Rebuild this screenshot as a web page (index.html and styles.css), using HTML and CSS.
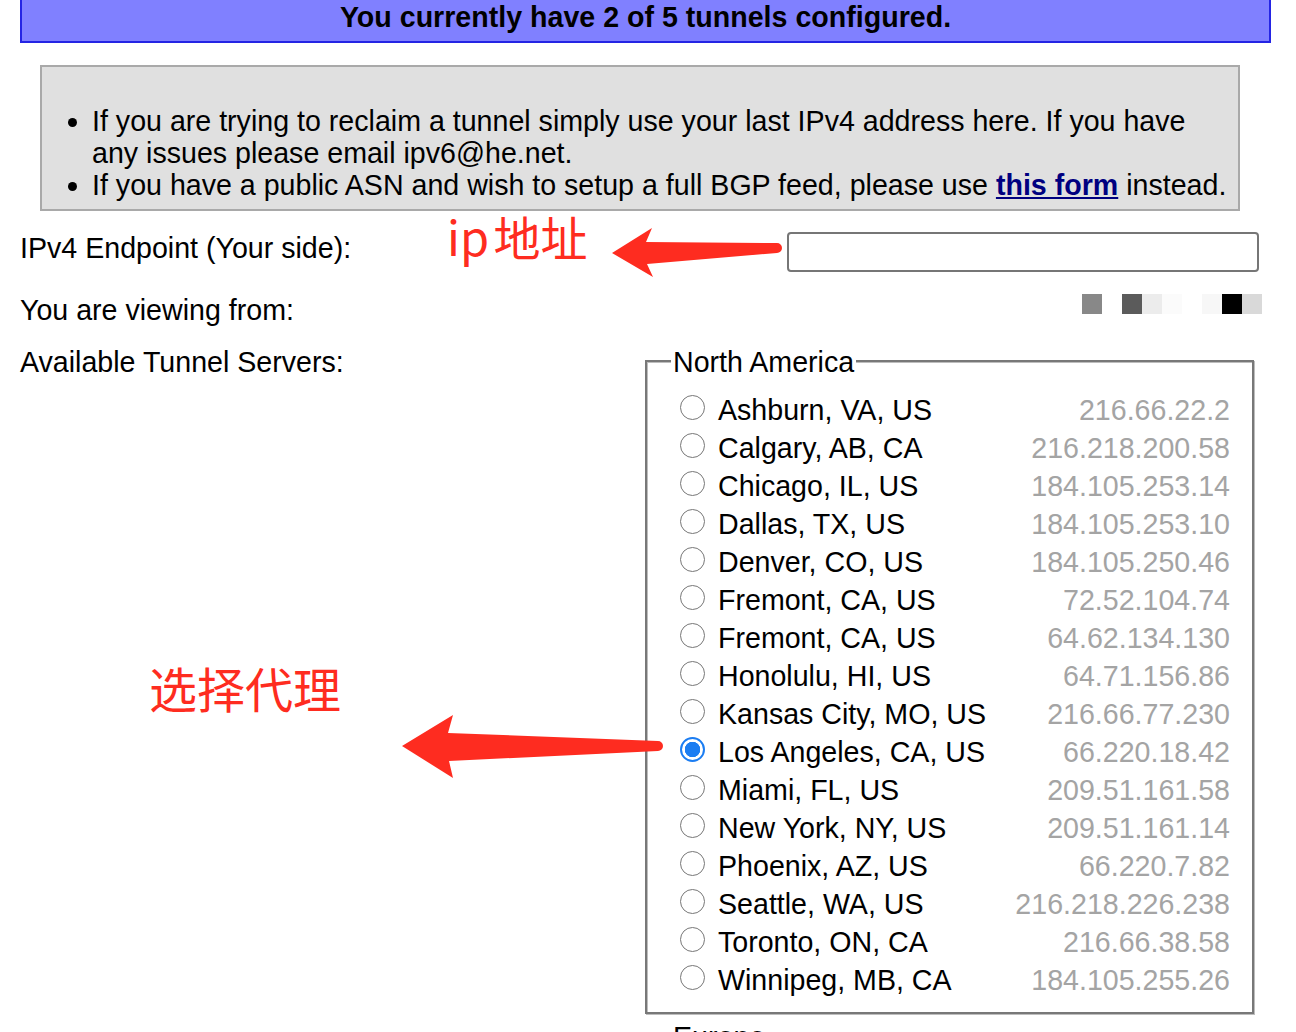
FILE: index.html
```html
<!DOCTYPE html>
<html lang="en">
<head>
<meta charset="utf-8">
<title>Create Regular Tunnel</title>
<link rel="stylesheet" href="styles.css">
</head>
<body>
<div class="page">
  <div class="banner">You currently have 2 of 5 tunnels configured.</div>

  <div class="notice">
    <ul>
      <li>If you are trying to reclaim a tunnel simply use your last IPv4 address here. If you have<br>any issues please email ipv6@he.net.</li>
      <li>If you have a public ASN and wish to setup a full BGP feed, please use <a href="#" class="link">this form</a> instead.</li>
    </ul>
  </div>

  <div class="form">
    <div class="label">IPv4 Endpoint (Your side):</div>
    <div><input class="endpoint" type="text" value=""></div>

    <div class="label">You are viewing from:</div>
    <div class="pixels">
      <span class="px" style="background:#888888"></span>
      <span class="px" style="background:#ffffff"></span>
      <span class="px" style="background:#5b5b5b"></span>
      <span class="px" style="background:#ececec"></span>
      <span class="px" style="background:#fbfbfb"></span>
      <span class="px" style="background:#ffffff"></span>
      <span class="px" style="background:#f7f7f7"></span>
      <span class="px" style="background:#000000"></span>
      <span class="px" style="background:#d9d9d9"></span>
    </div>

    <div class="label">Available Tunnel Servers:</div>
    <div class="regions">
      <fieldset class="region">
        <legend>North America</legend>
        <label class="server"><input class="radio" type="radio" name="srv"><span class="city">Ashburn, VA, US</span><span class="ip">216.66.22.2</span></label>
        <label class="server"><input class="radio" type="radio" name="srv"><span class="city">Calgary, AB, CA</span><span class="ip">216.218.200.58</span></label>
        <label class="server"><input class="radio" type="radio" name="srv"><span class="city">Chicago, IL, US</span><span class="ip">184.105.253.14</span></label>
        <label class="server"><input class="radio" type="radio" name="srv"><span class="city">Dallas, TX, US</span><span class="ip">184.105.253.10</span></label>
        <label class="server"><input class="radio" type="radio" name="srv"><span class="city">Denver, CO, US</span><span class="ip">184.105.250.46</span></label>
        <label class="server"><input class="radio" type="radio" name="srv"><span class="city">Fremont, CA, US</span><span class="ip">72.52.104.74</span></label>
        <label class="server"><input class="radio" type="radio" name="srv"><span class="city">Fremont, CA, US</span><span class="ip">64.62.134.130</span></label>
        <label class="server"><input class="radio" type="radio" name="srv"><span class="city">Honolulu, HI, US</span><span class="ip">64.71.156.86</span></label>
        <label class="server"><input class="radio" type="radio" name="srv"><span class="city">Kansas City, MO, US</span><span class="ip">216.66.77.230</span></label>
        <label class="server"><input class="radio" type="radio" name="srv" checked><span class="city">Los Angeles, CA, US</span><span class="ip">66.220.18.42</span></label>
        <label class="server"><input class="radio" type="radio" name="srv"><span class="city">Miami, FL, US</span><span class="ip">209.51.161.58</span></label>
        <label class="server"><input class="radio" type="radio" name="srv"><span class="city">New York, NY, US</span><span class="ip">209.51.161.14</span></label>
        <label class="server"><input class="radio" type="radio" name="srv"><span class="city">Phoenix, AZ, US</span><span class="ip">66.220.7.82</span></label>
        <label class="server"><input class="radio" type="radio" name="srv"><span class="city">Seattle, WA, US</span><span class="ip">216.218.226.238</span></label>
        <label class="server"><input class="radio" type="radio" name="srv"><span class="city">Toronto, ON, CA</span><span class="ip">216.66.38.58</span></label>
        <label class="server"><input class="radio" type="radio" name="srv"><span class="city">Winnipeg, MB, CA</span><span class="ip">184.105.255.26</span></label>
      </fieldset>
      <fieldset class="region next">
        <legend>Europe</legend>
        <label class="server"><input class="radio" type="radio" name="srv"><span class="city">Amsterdam, NL</span><span class="ip">216.66.84.46</span></label>
        <label class="server"><input class="radio" type="radio" name="srv"><span class="city">Berlin, DE</span><span class="ip">216.66.86.114</span></label>
      </fieldset>
    </div>
  </div>
</div>

<div class="note note-ip">ip 地址</div>
<div class="note note-proxy">选择代理</div>
<svg class="arrows" width="1296" height="1032" viewBox="0 0 1296 1032" aria-hidden="true">
  <path d="M612 253 L652 228 L646 242 L777 243 A5 5 0 0 1 777 253 L647 264 L653 277 Z" fill="#fe2c20"/>
  <path d="M402 746 L453 715 L448 733 L658 741 A5 5 0 0 1 658 751 L449 761 L453 778 Z" fill="#fe2c20"/>
</svg>
</body>
</html>
```

FILE: styles.css
```css
html {
  overflow: hidden;
}

body {
  margin: 0;
  position: relative;
  font-family: "Liberation Sans", Arial, Helvetica, sans-serif;
  font-size: 28.6px;
  line-height: 32px;
  color: #000;
  background: #fff;
}

.page {
  padding-left: 20px;
}

.banner {
  box-sizing: border-box;
  width: 1251px;
  margin-top: -14px;
  padding: 13px 0 8px;
  border: 2px solid #2424e4;
  background: #8080ff;
  text-align: center;
  font-weight: bold;
}

.notice {
  box-sizing: border-box;
  width: 1200px;
  margin: 22px 0 0 20px;
  padding: 38px 0 8px 0;
  border: 2px solid #a9a9a9;
  background: #e0e0e0;
}

.notice ul {
  margin: 0;
  padding-left: 50px;
}

.link {
  color: #000080;
  font-weight: bold;
  text-decoration: underline;
}

.form {
  display: grid;
  grid-template-columns: 625px 1fr;
  grid-template-rows: 42px 32px auto;
  row-gap: 20px;
  margin-top: 19px;
}

.label {
  padding-top: 2px;
  white-space: nowrap;
}

.endpoint {
  display: block;
  box-sizing: border-box;
  width: 472px;
  height: 40px;
  margin: 2px 0 0 142px;
  border: 2px solid #767676;
  border-radius: 4px;
  background: #fff;
  font: inherit;
  padding: 0 6px;
}

.pixels {
  display: flex;
  margin: 2px 0 0 437px;
}

.px {
  width: 20px;
  height: 20px;
}

.regions {
  display: flex;
  flex-direction: column;
}

.region {
  box-sizing: border-box;
  width: 609px;
  min-width: 0;
  margin: 0;
  padding: 13px 22px 13px 24px;
  border: 2px solid #787878;
  box-shadow: inset 1px 1px 0 #bdbdbd, 1px 1px 0 #bdbdbd;
}

.region.next {
  margin-top: 5px;
}

.region legend {
  padding: 2px 2px 0;
  line-height: 32px;
  background: #fff;
}

.server {
  display: grid;
  grid-template-columns: auto 1fr auto;
  align-items: center;
  height: 38px;
}

.radio {
  appearance: none;
  -webkit-appearance: none;
  box-sizing: border-box;
  width: 25px;
  height: 25px;
  margin: 0 13px 6px 9px;
  border: 1.8px solid #777777;
  border-radius: 50%;
  background: #fff;
}

.radio:checked {
  border: 2px solid #1b7df2;
  background: radial-gradient(circle, #1b7df2 0 7.5px, #fff 8px);
}

.city {
  white-space: nowrap;
}

.ip {
  color: #a4a4a4;
  text-align: right;
  white-space: nowrap;
}

.note {
  position: absolute;
  color: #fe2c20;
  font-family: "Noto Sans CJK SC", "Liberation Sans", sans-serif;
  font-size: 47px;
  line-height: 1;
  white-space: nowrap;
}

.note-ip {
  left: 447px;
  top: 212px;
  word-spacing: -6px;
}

.note-proxy {
  left: 149px;
  top: 663px;
  font-size: 48px;
}

.arrows {
  position: absolute;
  left: 0;
  top: 0;
  pointer-events: none;
}
```
